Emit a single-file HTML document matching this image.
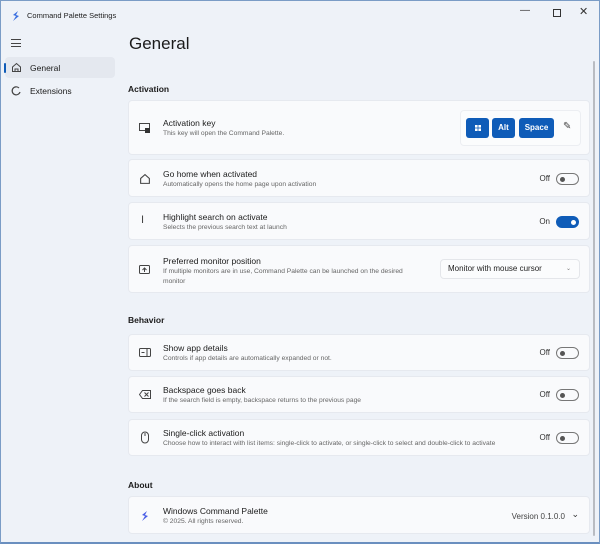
<!DOCTYPE html><html><head><style>
*{box-sizing:border-box;margin:0;padding:0}
body{width:600px;height:544px;overflow:hidden;background:#eef2f8;font-family:"Liberation Sans",sans-serif;color:#1b1b1b;position:relative}
.win{position:absolute;inset:0;border:1px solid #7a9cc6;border-bottom:2px solid #6a8fbf}
.t{position:absolute;white-space:nowrap}
.card{position:absolute;left:127px;width:462px;background:#f9fafc;border-radius:4px;border:1px solid #e6e9ef}
.card .ti{position:absolute;left:34px;font-size:8.5px;color:#1b1b1b}
.card .d{position:absolute;left:34px;font-size:6.7px;color:#666}
.tog{position:absolute;right:10px;width:23px;height:12px;border-radius:6px;border:1px solid #777}
.tog::after{content:"";position:absolute;left:2.5px;top:2.5px;width:5px;height:5px;border-radius:50%;background:#555}
.tog.on{background:#0f5cb8;border-color:#0f5cb8}
.tog.on::after{left:auto;right:2.5px;background:#fff}
.st{position:absolute;right:39px;font-size:8px;color:#333}
.h{position:absolute;left:127px;font-size:8.5px;font-weight:bold}
.ic{position:absolute;left:10px}
.k{position:absolute;top:17px;height:20px;background:#0f5cb8;color:#fff;border-radius:3px;font-size:8px;font-weight:bold;text-align:center;line-height:20px}
</style></head><body><div class="win">
<svg class="t" style="left:9px;top:9px" width="12" height="12" viewBox="0 0 12 12"><path d="M8 1L3 5l3 1-3 5 6-5-3-1z" fill="#3a6fe0"/></svg>
<div class="t" style="left:26px;top:10px;font-size:7.5px;color:#222">Command Palette Settings</div>
<div class="t" style="left:519px;top:4px;font-size:10px;color:#333">—</div>
<div class="t" style="left:552px;top:8px;width:8px;height:8px;border:1px solid #333"></div>
<div class="t" style="left:578px;top:4px;font-size:11px;color:#333">✕</div>
<div class="t" style="left:10px;top:38px;width:10px;height:8px;border-top:1px solid #444;border-bottom:1px solid #444"></div>
<div class="t" style="left:10px;top:41.5px;width:10px;height:1px;background:#444"></div>
<div class="t" style="left:4px;top:56px;width:110px;height:21px;background:#e4e8ef;border-radius:4px"></div>
<div class="t" style="left:3px;top:62px;width:2px;height:10px;background:#0f5cb8;border-radius:1px"></div>
<svg class="t" style="left:10px;top:61px" width="11" height="11" viewBox="0 0 11 11"><path d="M1.5 5L5.5 1.5 9.5 5V9.5H1.5Z M4 9.5V7h3v2.5" fill="none" stroke="#444"/></svg>
<div class="t" style="left:29px;top:62px;font-size:8.5px">General</div>
<svg class="t" style="left:10px;top:84px" width="11" height="11" viewBox="0 0 11 11"><path d="M8 3A4 4 0 1 0 9 7" fill="none" stroke="#444" stroke-width="1.2"/></svg>
<div class="t" style="left:29px;top:85px;font-size:8.5px">Extensions</div>
<div class="t" style="left:128px;top:33px;font-size:17px;font-weight:500">General</div>
<div class="h" style="top:83px">Activation</div>
<div class="card" style="top:99px;height:55px">
<svg class="ic" style="top:21px" width="12" height="12" viewBox="0 0 12 12"><rect x="0.5" y="1.5" width="10" height="7" fill="none" stroke="#444"/><rect x="6" y="6" width="5" height="5" fill="#333"/></svg>
<div class="ti" style="top:17px">Activation key</div><div class="d" style="top:29px">This key will open the Command Palette.</div>
<div style="position:absolute;left:331px;top:9px;width:121px;height:36px;background:#fbfcfd;border:1px solid #eceef2;border-radius:4px"></div>
<div class="k" style="left:337px;width:23px"><svg width="6" height="6" viewBox="0 0 6 6" style="vertical-align:middle"><rect x="0" y="0" width="2.6" height="2.6" fill="#fff"/><rect x="3.4" y="0" width="2.6" height="2.6" fill="#fff"/><rect x="0" y="3.4" width="2.6" height="2.6" fill="#fff"/><rect x="3.4" y="3.4" width="2.6" height="2.6" fill="#fff"/></svg></div><div class="k" style="left:363px;width:23px">Alt</div><div class="k" style="left:390px;width:35px">Space</div>
<div class="t" style="left:434px;top:20px;font-size:10px;color:#444">✎</div>
</div>
<div class="card" style="top:158px;height:38px">
<svg class="ic" style="top:13px" width="12" height="12" viewBox="0 0 11 11"><path d="M1.5 5L5.5 1.5 9.5 5V9.5H1.5Z" fill="none" stroke="#444"/></svg>
<div class="ti" style="top:9px">Go home when activated</div><div class="d" style="top:21px">Automatically opens the home page upon activation</div>
<div class="st" style="top:14px">Off</div><div class="tog" style="top:13px"></div></div>
<div class="card" style="top:201px;height:38px">
<div class="t" style="left:12px;top:11px;font-size:11px;color:#444">I</div>
<div class="ti" style="top:9px">Highlight search on activate</div><div class="d" style="top:21px">Selects the previous search text at launch</div>
<div class="st" style="top:14px">On</div><div class="tog on" style="top:13px"></div></div>
<div class="card" style="top:244px;height:48px">
<svg class="ic" style="top:18px" width="12" height="12" viewBox="0 0 12 12"><rect x="0.5" y="1.5" width="10" height="8" rx="1" fill="none" stroke="#444"/><path d="M5.5 8V4M3.5 6l2-2 2 2" fill="none" stroke="#444"/></svg>
<div class="ti" style="top:10px">Preferred monitor position</div><div class="d" style="top:21px;line-height:9.5px">If multiple monitors are in use, Command Palette can be launched on the desired<br>monitor</div>
<div style="position:absolute;left:311px;top:13px;width:140px;height:20px;background:#fbfcfd;border:1px solid #e4e6ea;border-radius:4px;font-size:8px;line-height:18px;padding-left:7px;color:#222">Monitor with mouse cursor<span style="position:absolute;right:8px;font-size:6px;color:#777">⌄</span></div></div>
<div class="h" style="top:314px">Behavior</div>
<div class="card" style="top:333px;height:37px">
<svg class="ic" style="top:12px" width="12" height="11" viewBox="0 0 12 11"><rect x="0.5" y="1.5" width="11" height="8" rx="1" fill="none" stroke="#444"/><path d="M8 1.5v8M2.5 5.5h3" stroke="#444"/></svg>
<div class="ti" style="top:8px">Show app details</div><div class="d" style="top:20px">Controls if app details are automatically expanded or not.</div>
<div class="st" style="top:13px">Off</div><div class="tog" style="top:12px"></div></div>
<div class="card" style="top:375px;height:37px">
<svg class="ic" style="top:12px" width="12" height="11" viewBox="0 0 12 11"><path d="M3.5 1.5h8v8h-8L0.5 5.5Z M5.5 3.5l4 4M9.5 3.5l-4 4" fill="none" stroke="#444"/></svg>
<div class="ti" style="top:8px">Backspace goes back</div><div class="d" style="top:20px">If the search field is empty, backspace returns to the previous page</div>
<div class="st" style="top:13px">Off</div><div class="tog" style="top:12px"></div></div>
<div class="card" style="top:418px;height:37px">
<svg class="ic" style="top:11px" width="12" height="13" viewBox="0 0 12 13"><rect x="2.5" y="1" width="7" height="11" rx="3.5" fill="none" stroke="#444"/><path d="M6 2v3" stroke="#444"/></svg>
<div class="ti" style="top:8px">Single-click activation</div><div class="d" style="top:20px">Choose how to interact with list items: single-click to activate, or single-click to select and double-click to activate</div>
<div class="st" style="top:13px">Off</div><div class="tog" style="top:12px"></div></div>
<div class="h" style="top:479px">About</div>
<div class="card" style="top:495px;height:38px">
<svg class="ic" style="top:13px" width="12" height="12" viewBox="0 0 12 12"><path d="M8 1L3 5l3 1-3 5 6-5-3-1z" fill="#4a5ee6"/></svg>
<div class="ti" style="top:9px">Windows Command Palette</div><div class="d" style="top:21px">© 2025. All rights reserved.</div>
<div class="t" style="right:24px;top:15px;font-size:8px;color:#444">Version 0.1.0.0</div>
<div class="t" style="right:10px;top:12px;font-size:9px;color:#333">⌄</div></div>
<div class="t" style="left:592px;top:60px;width:2px;height:475px;background:#b9bcc2;border-radius:1px"></div>
</div></body></html>
